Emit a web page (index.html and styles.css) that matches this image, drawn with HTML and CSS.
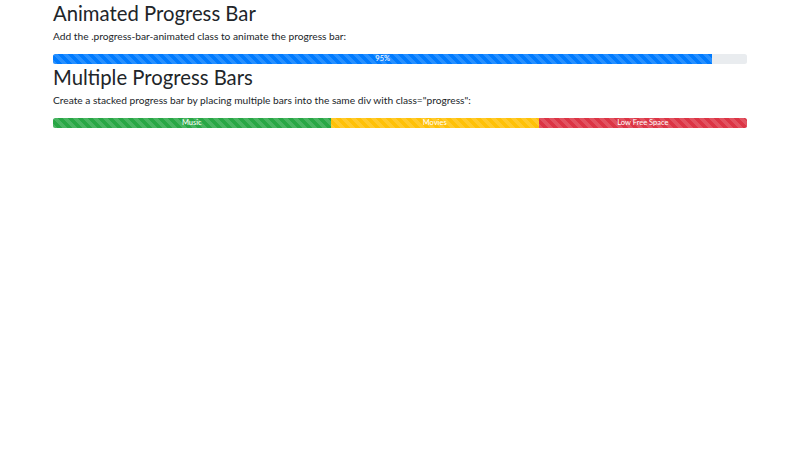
FILE: index.html
```html
<!DOCTYPE html>
<html>
<head>
<meta charset="utf-8">
<link rel="stylesheet" href="styles.css">
</head>
<body>
<div class="container">
  <h2 class="title">Animated Progress Bar</h2>
  <p class="lead-text">Add the .progress-bar-animated class to animate the progress bar:</p>
  <div class="progress">
    <div class="bar bar-blue" style="width:95%">95%</div>
  </div>
  <h2 class="title">Multiple Progress Bars</h2>
  <p class="lead-text">Create a stacked progress bar by placing multiple bars into the same div with class="progress":</p>
  <div class="progress">
    <div class="bar bar-green" style="width:40%">Music</div>
    <div class="bar bar-yellow" style="width:30%">Movies</div>
    <div class="bar bar-red" style="width:30%">Low Free Space</div>
  </div>
</div>
</body>
</html>
```
FILE: styles.css
```css
html, body {
  margin: 0;
  padding: 0;
  background: #fff;
}
body {
  font-family: "Lato", "Open Sans", "Liberation Sans", sans-serif;
  color: #212529;
}
.container {
  width: 694px;
  margin: 0 auto;
  padding: 0;
}
.title {
  margin: 0 0 5px 0;
  font-size: 20.3px;
  font-weight: 400;
  line-height: 24px;
  padding-top: 1px;
  height: 23px;
}
.lead-text {
  margin: 0 0 10px 0;
  font-size: 10.2px;
  line-height: 15px;
}
.progress {
  display: flex;
  height: 10px;
  background: #e9ecef;
  border-radius: 2.5px;
  overflow: hidden;
  font-size: 7.5px;
}
.bar {
  display: flex;
  align-items: center;
  justify-content: center;
  color: #fff;
  white-space: nowrap;
  line-height: 10px;
  background-image: linear-gradient(45deg, rgba(255,255,255,.15) 25%, transparent 25%, transparent 50%, rgba(255,255,255,.15) 50%, rgba(255,255,255,.15) 75%, transparent 75%, transparent);
  background-size: 10px 10px;
}
.bar-blue { background-color: #007bff; }
.bar-green { background-color: #28a745; }
.bar-yellow { background-color: #ffc107; }
.bar-red { background-color: #dc3545; }
```
